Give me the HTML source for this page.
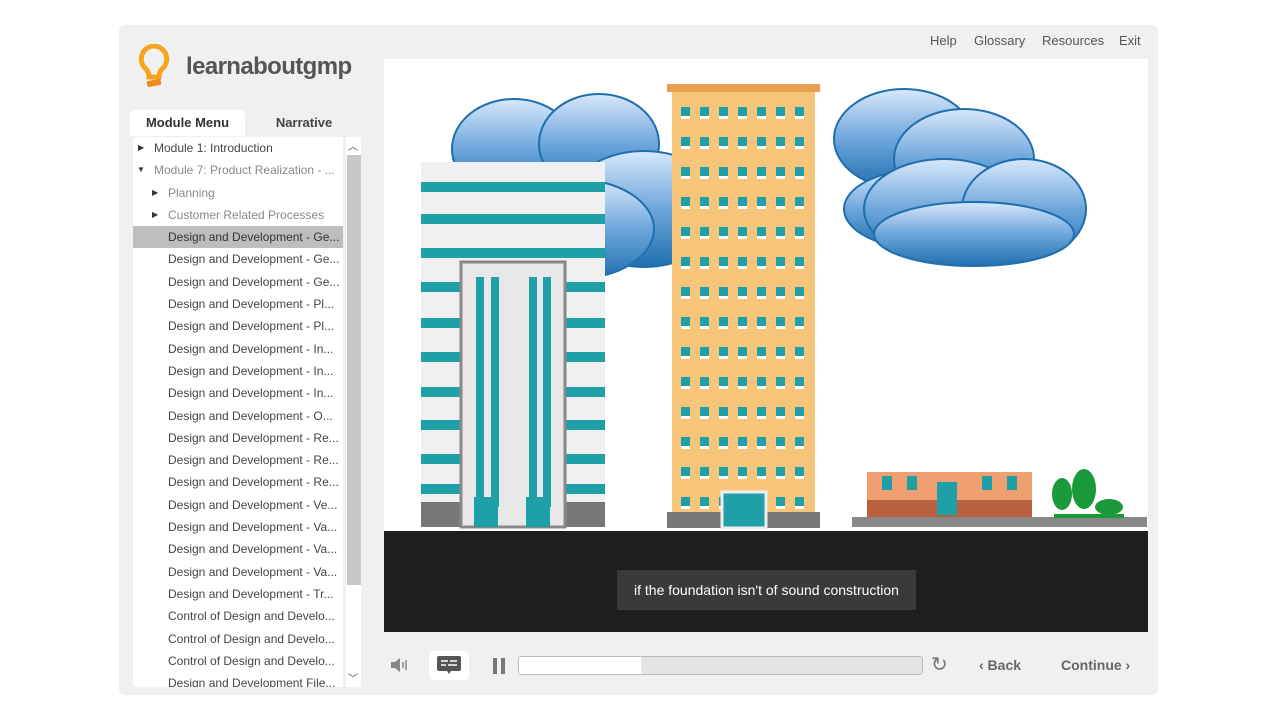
<!DOCTYPE html>
<html><head><style>
body{margin:0;width:1280px;height:720px;background:#fff;font-family:"Liberation Sans",sans-serif;position:relative;overflow:hidden}
.panel{position:absolute;left:119px;top:25px;width:1039px;height:670px;background:#f0f0f0;border-radius:6px}
.a{position:absolute}
.nav{position:absolute;top:33px;font-size:13px;color:#555}
.tab{position:absolute;top:110px;height:26px;font-size:13px;font-weight:bold;color:#333;line-height:26px;text-align:center}
.list{position:absolute;left:133px;top:137px;width:210px;height:550px;background:#fff;overflow:hidden}
.it{height:22.3px;line-height:22px;font-size:12px;color:#444;white-space:nowrap;padding-left:35px}
.it.g{color:#888}
.tri{position:absolute;font-size:8px;color:#333}
</style></head><body>
<div class="panel"></div>
<svg class="a" style="left:138px;top:44px" width="32" height="46" viewBox="0 0 32 46"><path d="M16 2a13 13 0 0 0-8 23c2 2 3 5 3 8h10c0-3 1-6 3-8A13 13 0 0 0 16 2z" fill="none" stroke="#f5a41c" stroke-width="5"/><rect x="9" y="36" width="14" height="6" rx="1" fill="#f28a1a" transform="rotate(-10 16 39)"/></svg>
<div class="a" style="left:186px;top:53px;font-size:24px;color:#555;font-weight:bold;letter-spacing:-0.6px">learnaboutgmp</div>
<div class="nav" style="left:930px">Help</div><div class="nav" style="left:974px">Glossary</div><div class="nav" style="left:1042px">Resources</div><div class="nav" style="left:1119px">Exit</div>
<div class="tab" style="left:130px;width:115px;background:#fff;border-radius:5px 5px 0 0">Module Menu</div>
<div class="tab" style="left:255px;width:98px;color:#444">Narrative</div>
<div class="list">
<div class="it" style="padding-left:21px;position:relative;color:#444"><span class="tri" style="left:5px">▶</span>Module 1: Introduction</div>
<div class="it g" style="padding-left:21px;position:relative"><span class="tri" style="left:4px">▼</span>Module 7: Product Realization - ...</div>
<div class="it g" style="position:relative"><span class="tri" style="left:19px">▶</span>Planning</div>
<div class="it g" style="position:relative"><span class="tri" style="left:19px">▶</span>Customer Related Processes</div>
<div class="it" style="background:#bdbdbd;color:#333">Design and Development - Ge...</div>
<div class="it">Design and Development - Ge...</div>
<div class="it">Design and Development - Ge...</div>
<div class="it">Design and Development - Pl...</div>
<div class="it">Design and Development - Pl...</div>
<div class="it">Design and Development - In...</div>
<div class="it">Design and Development - In...</div>
<div class="it">Design and Development - In...</div>
<div class="it">Design and Development - O...</div>
<div class="it">Design and Development - Re...</div>
<div class="it">Design and Development - Re...</div>
<div class="it">Design and Development - Re...</div>
<div class="it">Design and Development - Ve...</div>
<div class="it">Design and Development - Va...</div>
<div class="it">Design and Development - Va...</div>
<div class="it">Design and Development - Va...</div>
<div class="it">Design and Development - Tr...</div>
<div class="it">Control of Design and Develo...</div>
<div class="it">Control of Design and Develo...</div>
<div class="it">Control of Design and Develo...</div>
<div class="it">Design and Development File...</div>
</div>
<div class="a" style="left:346px;top:137px;width:15px;height:550px;background:#fff"></div>
<div class="a" style="left:347px;top:155px;width:14px;height:430px;background:#c8c8c8"></div>
<div class="a" style="left:348px;top:138px;font-size:10px;color:#444">︿</div>
<div class="a" style="left:348px;top:670px;font-size:10px;color:#444">﹀</div>
<div class="a" style="left:384px;top:59px;width:764px;height:472px;background:#fff;overflow:hidden">
<svg width="764" height="472">
<defs><linearGradient id="c" x1="0" y1="0" x2="0" y2="1"><stop offset="0" stop-color="#d8e8fb"/><stop offset="0.5" stop-color="#6ea6dc"/><stop offset="1" stop-color="#1f6fae"/></linearGradient>
<pattern id="win" x="297" y="48" width="19" height="30" patternUnits="userSpaceOnUse"><rect width="9" height="12" fill="#1fa0a8"/><rect y="9" width="9" height="3" fill="#fff"/></pattern></defs>
<g fill="url(#c)" stroke="#1f6fae" stroke-width="2">
<ellipse cx="130" cy="90" rx="62" ry="50"/><ellipse cx="215" cy="85" rx="60" ry="50"/><ellipse cx="260" cy="150" rx="80" ry="58"/><ellipse cx="190" cy="170" rx="80" ry="50"/>
<ellipse cx="520" cy="80" rx="70" ry="50"/><ellipse cx="580" cy="100" rx="70" ry="50"/><ellipse cx="540" cy="150" rx="80" ry="40"/>
<ellipse cx="560" cy="150" rx="80" ry="50"/><ellipse cx="640" cy="150" rx="62" ry="50"/><ellipse cx="590" cy="175" rx="100" ry="32"/>
</g>
<g transform="translate(37,103)">
<rect width="184" height="365" fill="#f0f0f0"/>
<g fill="#1fa0a8"><rect y="20" width="184" height="10"/><rect y="52" width="184" height="10"/><rect y="86" width="184" height="10"/><rect y="120" width="184" height="10"/><rect y="156" width="184" height="10"/><rect y="190" width="184" height="10"/><rect y="225" width="184" height="10"/><rect y="258" width="184" height="10"/><rect y="292" width="184" height="10"/><rect y="322" width="184" height="10"/></g>
<rect x="0" y="340" width="184" height="25" fill="#777"/>
<rect x="40" y="100" width="104" height="265" fill="#e8e8e8" stroke="#888" stroke-width="3"/>
<g fill="#1fa0a8"><rect x="55" y="115" width="8" height="230"/><rect x="70" y="115" width="8" height="230"/><rect x="108" y="115" width="8" height="230"/><rect x="122" y="115" width="8" height="230"/></g>
<rect x="53" y="335" width="24" height="30" fill="#1fa0a8"/><rect x="105" y="335" width="24" height="30" fill="#1fa0a8"/>
</g>
<g transform="translate(283,25)">
<rect width="153" height="8" fill="#e8a050"/><rect x="5" y="8" width="143" height="420" fill="#f7c57a"/>
<rect x="0" y="428" width="153" height="16" fill="#777"/>
</g>
<rect x="297" y="48" width="130" height="412" fill="url(#win)"/>
<rect x="338" y="433" width="44" height="36" fill="#1fa0a8" stroke="#eee" stroke-width="3"/>
<g transform="translate(483,413)">
<rect width="165" height="45" fill="#f0a070"/><rect y="28" width="165" height="17" fill="#b86040"/>
<rect x="70" y="10" width="20" height="33" fill="#1fa0a8"/>
<rect x="15" y="4" width="10" height="14" fill="#1fa0a8"/><rect x="40" y="4" width="10" height="14" fill="#1fa0a8"/><rect x="115" y="4" width="10" height="14" fill="#1fa0a8"/><rect x="140" y="4" width="10" height="14" fill="#1fa0a8"/>
<rect x="-15" y="45" width="295" height="10" fill="#888"/>
</g>
<g fill="#1a9a3a"><ellipse cx="678" cy="435" rx="10" ry="16"/><ellipse cx="700" cy="430" rx="12" ry="20"/><ellipse cx="725" cy="448" rx="14" ry="8"/><rect x="670" y="455" width="70" height="4"/></g>
</svg></div>
<div class="a" style="left:384px;top:531px;width:764px;height:101px;background:#1e1e1e"></div>
<div class="a" style="left:617px;top:570px;width:299px;height:40px;background:#3a3a3a;color:#fff;font-size:14px;line-height:40px;text-align:center">if the foundation isn't of sound construction</div>
<svg class="a" style="left:390px;top:657px" width="20" height="16"><path d="M1 5h4l5-4v14l-5-4H1z" fill="#888"/><path d="M13 5v6M16 3v10" stroke="#888" stroke-width="1.5"/></svg>
<div class="a" style="left:429px;top:651px;width:40px;height:29px;background:#fff;border-radius:5px"></div>
<svg class="a" style="left:437px;top:656px" width="24" height="20"><rect x="0" y="0" width="24" height="15" rx="2" fill="#555"/><path d="M10 15l2 3 2-3z" fill="#555"/><path d="M4 5h7M13 5h7M4 9h5M11 9h9" stroke="#fff" stroke-width="1.5"/></svg>
<div class="a" style="left:493px;top:658px;width:4px;height:16px;background:#777;box-shadow:8px 0 #777"></div>
<div class="a" style="left:518px;top:656px;width:403px;height:17px;background:#e4e4e4;border:1px solid #bbb;border-radius:3px;overflow:hidden"><div style="width:122px;height:17px;background:#fff"></div></div>
<div class="a" style="left:931px;top:652px;font-size:20px;color:#777">↻</div>
<div class="a" style="left:979px;top:657px;font-size:14px;font-weight:bold;color:#666">‹ Back</div>
<div class="a" style="left:1061px;top:657px;font-size:14px;font-weight:bold;color:#666">Continue ›</div>
</body></html>
